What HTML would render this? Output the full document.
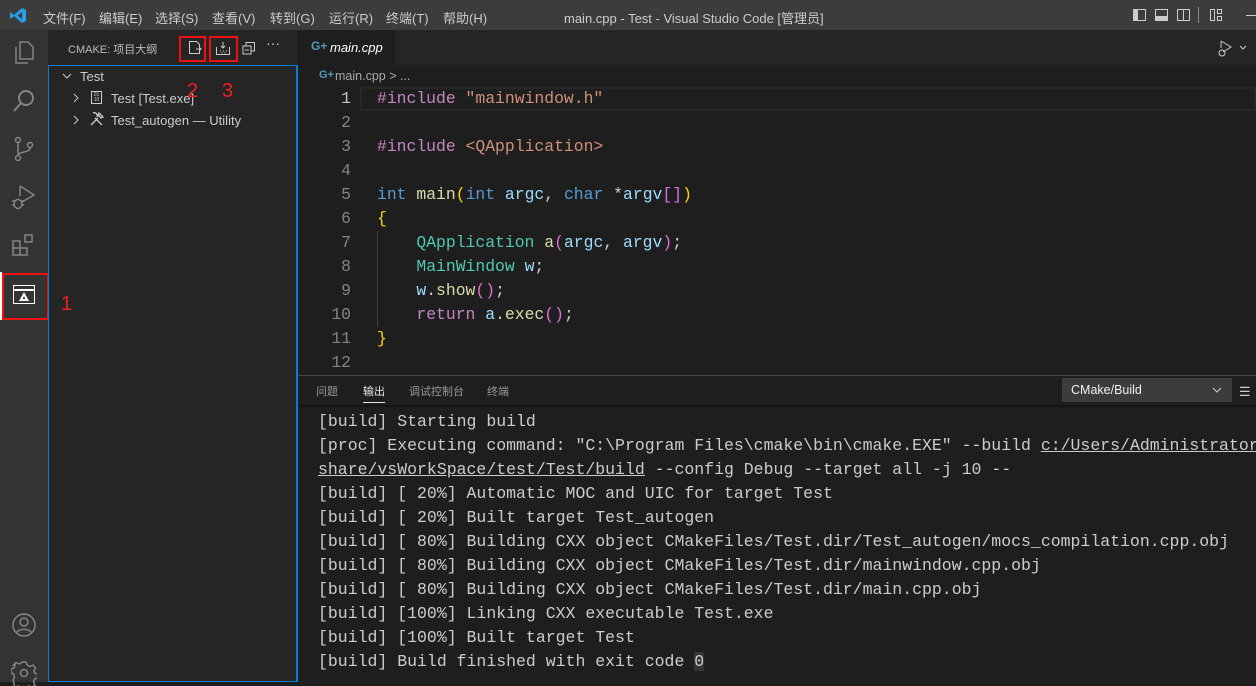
<!DOCTYPE html>
<html><head><meta charset="utf-8">
<style>
*{margin:0;padding:0;box-sizing:border-box}
body{width:1256px;height:682px;overflow:hidden;background:#1e1e1e;position:relative;font-family:"Liberation Sans","Noto Sans CJK SC",sans-serif;color:#ccc}
.a{position:absolute}
.mono{font-family:"Liberation Mono","Noto Sans CJK SC",monospace}
.title{left:0;top:0;width:1256px;height:30px;background:#3c3c3c;font-size:13px;color:#ccc}
.menu span{position:absolute;top:8px}
.act{left:0;top:30px;width:48px;height:652px;background:#333}
.side{left:48px;top:30px;width:249px;height:652px;background:#252526}
.tabs{left:297px;top:30px;width:959px;height:35px;background:#252526}
.code div{position:absolute;height:24px;line-height:24px;font-size:16.4px;white-space:pre}
.ln{width:55px;text-align:right;color:#858585;left:296px}
.out div{position:absolute;left:318px;height:24px;line-height:24px;font-size:16.5px;white-space:pre;color:#ccc}
.red{position:absolute;border:2px solid #f01010}
.num{position:absolute;color:#f02020;font-size:20px}
.ic{position:absolute}
</style></head><body>
<div class="a title">
<svg class="ic" style="left:10px;top:7px" width="17" height="17" viewBox="0 0 17 17"><path d="M12 1 L16 3 V14 L12 16 L4 9 L1 11.5 L0 11 V6 L1 5.5 L4 8 L12 1Z M12 5 L7.5 8.5 L12 12Z" fill="#2a9fe8"/></svg>
<div class="menu">
<span style="left:43px">文件(F)</span><span style="left:99px">编辑(E)</span><span style="left:155px">选择(S)</span><span style="left:212px">查看(V)</span><span style="left:270px">转到(G)</span><span style="left:329px">运行(R)</span><span style="left:386px">终端(T)</span><span style="left:443px">帮助(H)</span>
<span style="left:564px">main.cpp - Test - Visual Studio Code [管理员]</span>
</div>
<div class="a" style="left:1133px;top:9px;width:13px;height:12px;border:1px solid #ccc;border-left:5px solid #ccc"></div>
<div class="a" style="left:1155px;top:9px;width:13px;height:12px;border:1px solid #ccc;border-bottom:5px solid #ccc"></div>
<div class="a" style="left:1177px;top:9px;width:13px;height:12px;border:1px solid #ccc"></div><div class="a" style="left:1183px;top:9px;width:1px;height:12px;background:#ccc"></div>
<div class="a" style="left:1198px;top:7px;width:1px;height:16px;background:#888"></div>
<div class="a" style="left:1210px;top:9px;width:5px;height:12px;border:1px solid #ccc"></div><div class="a" style="left:1217px;top:9px;width:5px;height:5px;border:1px solid #ccc"></div><div class="a" style="left:1217px;top:16px;width:5px;height:5px;border:1px solid #ccc"></div>
<div class="a" style="left:1246px;top:15px;width:10px;height:1px;background:#ccc"></div>
</div>

<div class="a act">
<svg class="ic" style="left:12px;top:10px" width="24" height="26" viewBox="0 0 24 26" fill="none" stroke="#858585" stroke-width="1.5"><path d="M8 2h8l5 5v12H8z M4 7v16h12"/></svg>
<svg class="ic" style="left:12px;top:58px" width="24" height="26" viewBox="0 0 24 26" fill="none" stroke="#858585" stroke-width="2"><circle cx="14" cy="10" r="7"/><path d="M9 15L2 23"/></svg>
<svg class="ic" style="left:12px;top:106px" width="24" height="26" viewBox="0 0 24 26" fill="none" stroke="#858585" stroke-width="1.5"><circle cx="6" cy="4" r="2.5"/><circle cx="6" cy="22" r="2.5"/><circle cx="18" cy="9" r="2.5"/><path d="M6 7v12M18 12c0 5-12 3-12 8"/></svg>
<svg class="ic" style="left:10px;top:153px" width="28" height="28" viewBox="0 0 28 28" fill="none" stroke="#858585" stroke-width="1.5"><path d="M10 3L24 12L12 19 M10 3V13"/><ellipse cx="8" cy="21" rx="4" ry="4.5"/><path d="M2 18h3M2 22h2M11 18h3M11 22h3"/></svg>
<svg class="ic" style="left:11px;top:203px" width="26" height="26" viewBox="0 0 26 26" fill="none" stroke="#858585" stroke-width="1.5"><path d="M2 8h7v7H2zM2 15h7v7H2zM9 15h7v7H9z"/><rect x="14" y="2" width="7" height="7"/></svg>
<div class="a" style="left:0;top:242px;width:2px;height:48px;background:#fff"></div>
<div class="red" style="left:2px;top:243px;width:47px;height:47px"></div>
<div class="a" style="left:13px;top:255px;width:22px;height:19px;border:1.5px solid #fff"></div>
<div class="a" style="left:13px;top:259px;width:22px;height:1.5px;background:#fff"></div>
<svg class="ic" style="left:19px;top:262px" width="10" height="9" viewBox="0 0 10 9"><path d="M5 0L10 9H0z" fill="#fff"/><path d="M5 4L6.3 7H3.7z" fill="#333"/></svg>
<svg class="ic" style="left:11px;top:582px" width="26" height="26" viewBox="0 0 26 26" fill="none" stroke="#858585" stroke-width="1.5"><circle cx="13" cy="13" r="11"/><circle cx="13" cy="10" r="4"/><path d="M5.5 21c2-5 13-5 15 0"/></svg>
<svg class="ic" style="left:11px;top:630px" width="26" height="26" viewBox="0 0 26 26" fill="none" stroke="#858585" stroke-width="1.5"><circle cx="13" cy="13" r="3.5"/><path d="M11 2h4l1 3 3 1.5 3-1.5 2.5 3-1.5 3 .5 2 3 1v4l-3 1-1 3 1.5 3-3 2.5-3-1.5-2 1-1 3h-4l-1-3-3-1-3 1.5L2 20l1.5-3-1-3-2.5-1v-4l3-1 1-3L2.5 5 5 2.5l3 1.5 2-1z"/></svg>
</div>

<div class="a side">
<div class="a" style="left:20px;top:11px;font-size:11px;color:#bbb">CMAKE: 项目大纲</div>
<div class="red" style="left:131px;top:6px;width:27px;height:26px"></div>
<div class="red" style="left:161px;top:6px;width:29px;height:26px"></div>
<svg class="ic" style="left:140px;top:11px" width="14" height="14" viewBox="0 0 14 14" fill="none" stroke="#ccc"><path d="M1.5 .5h7l3 3v9h-10zM8 8h5M11 6l2 2-2 2"/></svg>
<svg class="ic" style="left:168px;top:11px" width="14" height="14" viewBox="0 0 14 14" fill="none" stroke="#ccc"><path d="M.5 6v7.5h13V6M7 1v6M5 5l2 2 2-2M4 10h1M7 10h1M10 10h1M5.5 12h1M8.5 12h1"/></svg>
<svg class="ic" style="left:194px;top:11px" width="14" height="14" viewBox="0 0 14 14" fill="none" stroke="#ccc"><rect x="1" y="5" width="8" height="8"/><path d="M4 5V1.5h8.5V10H9M3 9h4"/></svg>
<div class="a" style="left:218px;top:5px;font-size:14px;color:#ccc">···</div>
<div class="a" style="left:0;top:35px;width:249px;height:617px;border:1px solid #007fd4"></div>
<svg class="ic" style="left:14px;top:41px" width="10" height="10" viewBox="0 0 10 10" fill="none" stroke="#ccc"><path d="M1 3l4 4 4-4"/></svg>
<div class="a" style="left:32px;top:39px;font-size:13px;color:#ccc">Test</div>
<svg class="ic" style="left:23px;top:63px" width="10" height="10" viewBox="0 0 10 10" fill="none" stroke="#ccc"><path d="M3 1l4 4-4 4"/></svg>
<div class="a" style="left:43px;top:61px;width:11px;height:13px;border:1px solid #ccc;font-size:5px;line-height:5px;text-align:center;padding-top:1px">01<br>10</div>
<div class="a" style="left:63px;top:61px;font-size:13px;color:#ccc">Test [Test.exe]</div>
<svg class="ic" style="left:23px;top:85px" width="10" height="10" viewBox="0 0 10 10" fill="none" stroke="#ccc"><path d="M3 1l4 4-4 4"/></svg>
<svg class="ic" style="left:41px;top:82px" width="15" height="15" viewBox="0 0 15 15" fill="none" stroke="#ccc" stroke-width="1.3"><path d="M2 13L9 6M4 1a3 3 0 014 4M13 13L6 6M10 1l4 4-2 1-3-3z"/></svg>
<div class="a" style="left:63px;top:83px;font-size:13px;color:#ccc">Test_autogen — Utility</div>
<div class="num" style="left:139px;top:50px">2</div>
<div class="num" style="left:174px;top:50px">3</div>
</div>
<div class="num" style="left:61px;top:293px">1</div>

<div class="a tabs">
<div class="a" style="left:0;top:0;width:98px;height:35px;background:#1e1e1e"></div>
<div class="a" style="left:14px;top:9px;font-size:12px;color:#519aba;font-weight:bold">G+</div>
<div class="a" style="left:33px;top:10px;font-size:13px;color:#fff;font-style:italic">main.cpp</div>
<svg class="ic" style="left:920px;top:9px" width="30" height="18" viewBox="0 0 30 18" fill="none" stroke="#ccc"><path d="M4 2l10 6-8 5M4 2v7"/><circle cx="5" cy="14" r="3"/><path d="M23 7l3 3 3-3"/></svg>
</div>
<div class="a" style="left:319px;top:69px;font-size:11px;color:#519aba;font-weight:bold">G+</div>
<div class="a" style="left:335px;top:69px;font-size:12.5px;color:#aaa">main.cpp &gt; ...</div>
<div class="a" style="left:297px;top:65px;width:1px;height:617px;background:#007fd4"></div>

<div class="code mono">
<div class="a" style="left:360px;top:87px;width:896px;height:24px;border:2px solid #282828"></div>
<div class="ln" style="top:87px;color:#c6c6c6">1</div><div style="left:377px;top:87px"><span style="color:#c586c0">#include</span> <span style="color:#ce9178">"mainwindow.h"</span></div>
<div class="ln" style="top:111px">2</div>
<div class="ln" style="top:135px">3</div><div style="left:377px;top:135px"><span style="color:#c586c0">#include</span> <span style="color:#ce9178">&lt;QApplication&gt;</span></div>
<div class="ln" style="top:159px">4</div>
<div class="ln" style="top:183px">5</div><div style="left:377px;top:183px"><span style="color:#569cd6">int</span> <span style="color:#dcdcaa">main</span><span style="color:#ffd700">(</span><span style="color:#569cd6">int</span> <span style="color:#9cdcfe">argc</span>, <span style="color:#569cd6">char</span> *<span style="color:#9cdcfe">argv</span><span style="color:#da70d6">[]</span><span style="color:#ffd700">)</span></div>
<div class="ln" style="top:207px">6</div><div style="left:377px;top:207px;color:#ffd700">{</div>
<div class="ln" style="top:231px">7</div><div style="left:377px;top:231px">    <span style="color:#4ec9b0">QApplication</span> <span style="color:#dcdcaa">a</span><span style="color:#da70d6">(</span><span style="color:#9cdcfe">argc</span>, <span style="color:#9cdcfe">argv</span><span style="color:#da70d6">)</span>;</div>
<div class="ln" style="top:255px">8</div><div style="left:377px;top:255px">    <span style="color:#4ec9b0">MainWindow</span> <span style="color:#9cdcfe">w</span>;</div>
<div class="ln" style="top:279px">9</div><div style="left:377px;top:279px">    <span style="color:#9cdcfe">w</span>.<span style="color:#dcdcaa">show</span><span style="color:#da70d6">()</span>;</div>
<div class="ln" style="top:303px">10</div><div style="left:377px;top:303px">    <span style="color:#c586c0">return</span> <span style="color:#9cdcfe">a</span>.<span style="color:#dcdcaa">exec</span><span style="color:#da70d6">()</span>;</div>
<div class="ln" style="top:327px">11</div><div style="left:377px;top:327px;color:#ffd700">}</div>
<div class="ln" style="top:351px">12</div>
<div class="a" style="left:377px;top:231px;width:1px;height:96px;background:#404040"></div>
</div>

<div class="a" style="left:298px;top:375px;width:958px;height:1px;background:#444"></div>
<div class="a" style="left:316px;top:383px;font-size:11px;color:#999">问题</div>
<div class="a" style="left:363px;top:383px;font-size:11px;color:#e7e7e7">输出</div>
<div class="a" style="left:363px;top:402px;width:22px;height:1px;background:#e7e7e7"></div>
<div class="a" style="left:409px;top:383px;font-size:11px;color:#999">调试控制台</div>
<div class="a" style="left:487px;top:383px;font-size:11px;color:#999">终端</div>
<div class="a" style="left:1062px;top:378px;width:170px;height:24px;background:#3c3c3c"></div>
<div class="a" style="left:1071px;top:383px;font-size:12.5px;color:#f0f0f0">CMake/Build</div>
<svg class="ic" style="left:1212px;top:385px" width="10" height="10" viewBox="0 0 10 10" fill="none" stroke="#ccc"><path d="M1 3l4 4 4-4"/></svg>
<div class="a" style="left:1239px;top:384px;font-size:13px;color:#ccc">☰</div>
<div class="a" style="left:298px;top:405px;width:958px;height:3px;background:linear-gradient(#111,#1e1e1e)"></div>

<div class="out mono">
<div style="top:410px">[build] Starting build</div>
<div style="top:434px">[proc] Executing command: "C:\Program Files\cmake\bin\cmake.EXE" --build <span style="text-decoration:underline">c:/Users/Administrator</span></div>
<div style="top:458px"><span style="text-decoration:underline">share/vsWorkSpace/test/Test/build</span> --config Debug --target all -j 10 --</div>
<div style="top:482px">[build] [ 20%] Automatic MOC and UIC for target Test</div>
<div style="top:506px">[build] [ 20%] Built target Test_autogen</div>
<div style="top:530px">[build] [ 80%] Building CXX object CMakeFiles/Test.dir/Test_autogen/mocs_compilation.cpp.obj</div>
<div style="top:554px">[build] [ 80%] Building CXX object CMakeFiles/Test.dir/mainwindow.cpp.obj</div>
<div style="top:578px">[build] [ 80%] Building CXX object CMakeFiles/Test.dir/main.cpp.obj</div>
<div style="top:602px">[build] [100%] Linking CXX executable Test.exe</div>
<div style="top:626px">[build] [100%] Built target Test</div>
<div style="top:650px">[build] Build finished with exit code <span style="background:#333">0</span></div>
</div>
</body></html>
